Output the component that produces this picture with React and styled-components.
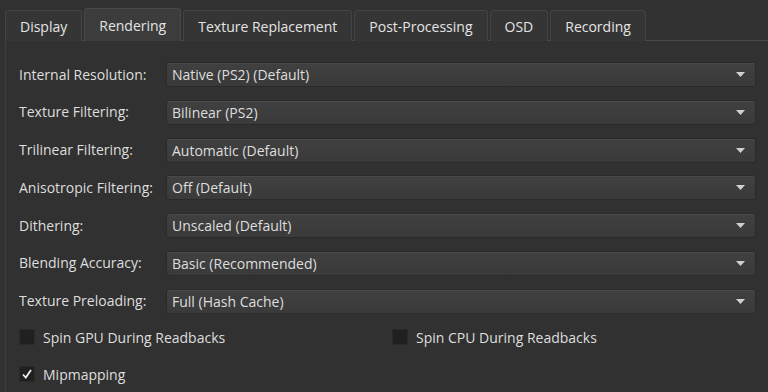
import React from 'react'
import styled, { createGlobalStyle } from 'styled-components'

const Global = createGlobalStyle`
  html, body {
    margin: 0;
    background: #313131;
    width: 768px;
    height: 392px;
    overflow: hidden;
  }
  * { box-sizing: border-box; }
`

const Window = styled.div`
  width: 768px;
  height: 392px;
  padding: 8px 0 0 5px;
  font-family: "Open Sans", "Noto Sans", sans-serif;
  font-size: 14px;
  color: #dedede;
  display: flex;
  flex-direction: column;
`

const TabBar = styled.div`
  display: flex;
  align-items: flex-end;
  gap: 2px;
  height: 33px;
  position: relative;
  z-index: 1;
`

const Tab = styled.div`
  height: ${p => (p.$active ? '33px' : '31px')};
  padding: 0 14px;
  display: flex;
  align-items: center;
  padding-top: ${p => (p.$active ? '0' : '1px')};
  background: ${p => (p.$active ? '#3c3c3c' : '#353535')};
  border: 1px solid ${p => (p.$active ? '#484848' : '#444')};
  border-bottom: none;
  border-radius: 3px 3px 0 0;
  color: #e4e4e4;
  white-space: nowrap;
`

const Pane = styled.div`
  flex: 1;
  border-top: 1px solid #4a4a4a;
  border-left: 1px solid #3d3d3d;
  background: #313131;
  padding: 21px 12px 0 13px;
  margin-top: -1px;
`

const Form = styled.div`
  display: grid;
  grid-template-columns: 147px 1fr;
  row-gap: 12.8px;
  align-items: center;
`

const Label = styled.div`
  line-height: 24px;
`

const Combo = styled.div`
  height: 25px;
  border: 1px solid #2a2a2a;
  border-radius: 3px;
  background: linear-gradient(#404040, #3a3a3a);
  box-shadow: inset 0 1px 0 #4a4a4a;
  display: flex;
  align-items: center;
  padding: 0 10px 0 5px;
  justify-content: space-between;
`

const Arrow = styled.svg`
  width: 9px;
  height: 5px;
`

const Checks = styled.div`
  display: grid;
  grid-template-columns: 373px 1fr;
  row-gap: 13px;
  margin-top: 11.5px;
`

const Check = styled.label`
  display: flex;
  align-items: center;
  gap: 8px;
  height: 24px;
`

const Box = styled.span`
  width: 16px;
  height: 16px;
  background: #202020;
  border: 1px solid #2a2a2a;
  display: flex;
  align-items: center;
  justify-content: center;
`

const settings = [
  ['Internal Resolution:', 'Native (PS2) (Default)'],
  ['Texture Filtering:', 'Bilinear (PS2)'],
  ['Trilinear Filtering:', 'Automatic (Default)'],
  ['Anisotropic Filtering:', 'Off (Default)'],
  ['Dithering:', 'Unscaled (Default)'],
  ['Blending Accuracy:', 'Basic (Recommended)'],
  ['Texture Preloading:', 'Full (Hash Cache)'],
]

const tabs = ['Display', 'Rendering', 'Texture Replacement', 'Post-Processing', 'OSD', 'Recording']

function CheckItem({ checked, children }) {
  return (
    <Check>
      <Box>
        {checked && (
          <svg width="12" height="12" viewBox="0 0 12 12">
            <path d="M2 6.5 L4.8 9.5 L10 2" fill="none" stroke="#f0f0f0" strokeWidth="1.8" />
          </svg>
        )}
      </Box>
      {children}
    </Check>
  )
}

export default function App() {
  return (
    <Window>
      <Global />
      <TabBar>
        {tabs.map(t => (
          <Tab key={t} $active={t === 'Rendering'}>{t}</Tab>
        ))}
      </TabBar>
      <Pane>
        <Form>
          {settings.map(([label, value]) => (
            <React.Fragment key={label}>
              <Label>{label}</Label>
              <Combo>
                <span>{value}</span>
                <Arrow viewBox="0 0 9 5">
                  <path d="M0 0 H9 L4.5 5 Z" fill="#d0d0d0" />
                </Arrow>
              </Combo>
            </React.Fragment>
          ))}
        </Form>
        <Checks>
          <CheckItem>Spin GPU During Readbacks</CheckItem>
          <CheckItem>Spin CPU During Readbacks</CheckItem>
          <CheckItem checked>Mipmapping</CheckItem>
        </Checks>
      </Pane>
    </Window>
  )
}
